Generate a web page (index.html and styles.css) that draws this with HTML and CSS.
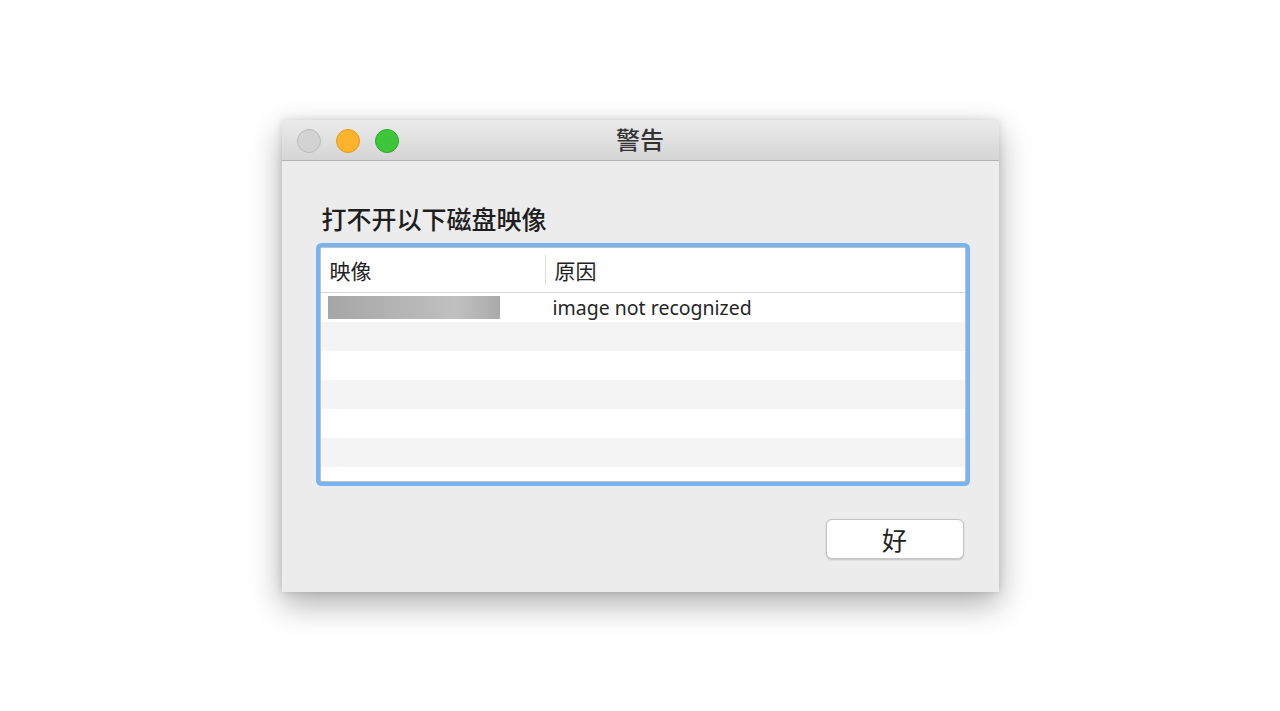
FILE: index.html
```html
<!DOCTYPE html>
<html lang="zh-CN">
<head>
  <meta charset="UTF-8" />
  <meta name="viewport" content="width=device-width, initial-scale=1.0" />
  <title>警告</title>
  <link rel="stylesheet" href="styles.css">
</head>
<body>
  <div class="window">
    <div class="titlebar">
      <div class="lights">
        <span class="light off"></span>
        <span class="light min"></span>
        <span class="light max"></span>
      </div>
      <div class="title">警告</div>
    </div>
    <div class="content">
      <h2 class="heading">打不开以下磁盘映像</h2>
      <div class="list">
        <div class="list-head">
          <div class="col col-image">映像</div>
          <div class="col col-reason">原因</div>
        </div>
        <div class="row">
          <div class="col col-image"><span class="redacted"></span></div>
          <div class="col col-reason">image not recognized</div>
        </div>
        <div class="row alt"></div>
        <div class="row"></div>
        <div class="row alt"></div>
        <div class="row"></div>
        <div class="row alt"></div>
        <div class="row"></div>
      </div>
      <div class="actions">
        <button class="ok">好</button>
      </div>
    </div>
  </div>
</body>
</html>
```

FILE: styles.css
```css
* {
  box-sizing: border-box;
}
body {
  margin: 0;
  height: 100vh;
  background: #ffffff;
  display: flex;
  justify-content: center;
  align-items: center;
  font-family: "Noto Sans CJK SC", "Noto Sans", sans-serif;
  color: #222;
}
.window {
  width: 717px;
  height: 472px;
  background: #ececec;
  box-shadow: 0 12px 30px rgba(0,0,0,0.32), 0 0 8px rgba(0,0,0,0.12);
  display: flex;
  flex-direction: column;
}
.titlebar {
  position: relative;
  height: 41px;
  flex: none;
  background: linear-gradient(#ebebeb, #d5d5d5);
  border-bottom: 1px solid #b3b3b3;
  display: flex;
  align-items: center;
  justify-content: center;
}
.lights {
  position: absolute;
  left: 15px;
  top: 9px;
  display: flex;
  gap: 15px;
}
.light {
  width: 24px;
  height: 24px;
  border-radius: 50%;
  border: 1px solid transparent;
}
.light.off {
  background: #d3d3d3;
  border-color: #bcbcbc;
}
.light.min {
  background: #fdb32a;
  border-color: #e09d1f;
}
.light.max {
  background: #3ec63b;
  border-color: #2fa82c;
}
.title {
  font-size: 24px;
  color: #333;
  font-weight: 500;
  margin-top: -2px;
}
.content {
  padding: 42px 29px 0 34px;
  display: flex;
  flex-direction: column;
}
.heading {
  margin: 0 0 0 6px;
  font-size: 25px;
  font-weight: 500;
  line-height: 30px;
  color: #1e1e1e;
}
/* table view with the blue focus ring */
.list {
  margin: 14px 4px 0 4px;
  height: 235px;
  background: #fff;
  border: 1px solid #c2c2c2;
  border-radius: 2px;
  box-shadow: 0 0 0 4px #76b5f2;
  overflow: hidden;
}
.list-head {
  display: flex;
  height: 45px;
  border-bottom: 1px solid #d6d6d6;
  align-items: center;
  padding-top: 1px;
}
.list-head .col-reason {
  border-left: 1px solid #dedede;
  height: 30px;
  padding-left: 9px;
}
.col {
  display: flex;
  align-items: center;
  font-size: 21px;
}
.col-image {
  width: 224px;
  padding-left: 9px;
}
.col-reason {
  padding-left: 7px;
  flex: 1;
}
.row {
  height: 29px;
  display: flex;
  align-items: center;
}
.row .col-reason {
  font-family: "Noto Sans", "Liberation Sans", sans-serif;
  font-size: 19.5px;
  color: #252525;
  padding-left: 8px;
}
.row.alt {
  background: #f4f4f4;
}
.redacted {
  display: block;
  width: 172px;
  height: 23px;
  margin-left: -2px;
  background: linear-gradient(90deg, #a6a6a6, #b4b4b4 40%, #c0c0c0 75%, #aaaaaa);
}
.actions {
  display: flex;
  justify-content: flex-end;
  margin-top: 37px;
  padding-right: 6px;
}
.ok {
  width: 138px;
  height: 40px;
  background: #fff;
  border: 1px solid #c4c4c4;
  border-radius: 6px;
  box-shadow: 0 1px 2px rgba(0,0,0,0.2);
  font-family: "Noto Sans CJK SC", sans-serif;
  font-size: 25px;
  color: #222;
  padding: 0;
  cursor: pointer;
}
```
